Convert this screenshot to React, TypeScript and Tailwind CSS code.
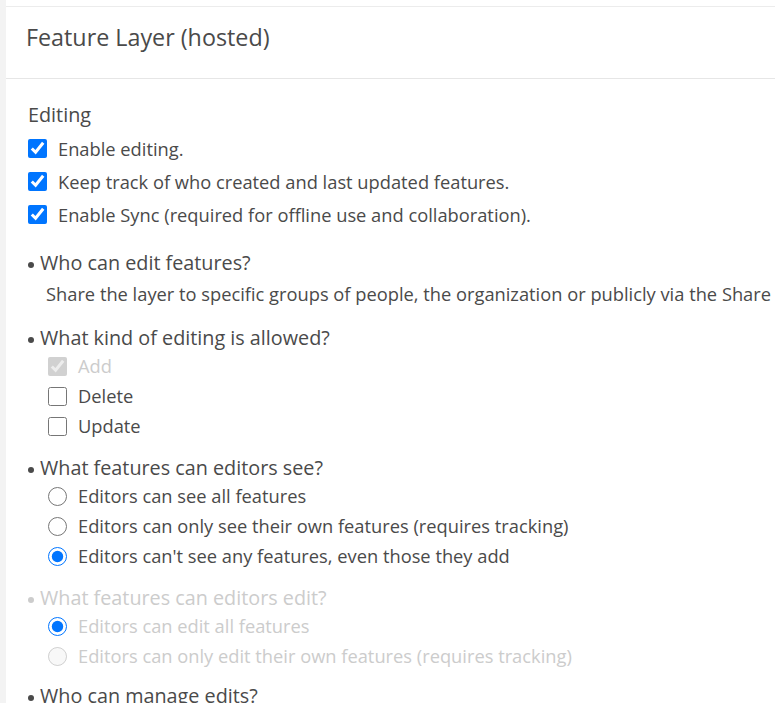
import React from 'react';

const font = { fontFamily: '"Open Sans", "Noto Sans", sans-serif' };

const Bullet: React.FC<{ text: string; disabled?: boolean }> = ({ text, disabled }) => (
    <div className={`flex items-center h-[26px] text-[19.8px] whitespace-nowrap ${disabled ? 'text-[#cccccc]' : 'text-[#4a4a4a]'}`}>
        <span className={`w-[6px] h-[6px] rounded-full mr-[6px] mt-[3px] shrink-0 ${disabled ? 'bg-[#cccccc]' : 'bg-[#4a4a4a]'}`} />
        {text}
    </div>
);

interface OptionProps {
    label: string;
    type: 'checkbox' | 'radio';
    name?: string;
    checked?: boolean;
    disabled?: boolean;
    muted?: boolean;
    indent?: boolean;
    height?: string;
}

const Option: React.FC<OptionProps> = ({ label, type, name, checked, disabled, muted, indent = true, height = 'h-[30px]' }) => (
    <label className={`flex items-center ${height} ${indent ? 'pl-[20px]' : ''} whitespace-nowrap`}>
        <input
            type={type}
            name={name}
            defaultChecked={checked}
            disabled={disabled}
            className="w-[19px] h-[19px] m-0 shrink-0 accent-[#0075ff]"
        />
        <span className={`ml-[11px] text-[18.3px] ${muted || disabled ? 'text-[#cccccc]' : 'text-[#4a4a4a]'}`}>{label}</span>
    </label>
);

export default function App() {
    return (
        <div className="flex min-h-screen bg-white overflow-hidden" style={font}>
            <div className="w-[6px] shrink-0 bg-[#f3f3f3]" />
            <div className="flex-1 min-w-0 mt-[6px] border-t border-[#ececec] overflow-hidden">
                <div className="h-[72px] flex items-center pl-[20px] border-b border-[#e6e6e6]">
                    <h1 className="text-[23.3px] text-[#4a4a4a] mb-[10px]">Feature Layer (hosted)</h1>
                </div>
                <div className="pl-[22px] pt-[19px]">
                    <div className="h-[34px] flex items-center text-[19.8px] text-[#4a4a4a]">Editing</div>
                    <Option type="checkbox" label="Enable editing." checked indent={false} height="h-[33px]" />
                    <Option type="checkbox" label="Keep track of who created and last updated features." checked indent={false} height="h-[33px]" />
                    <Option type="checkbox" label="Enable Sync (required for offline use and collaboration)." checked indent={false} height="h-[33px]" />

                    <div className="mt-[19px]">
                        <Bullet text="Who can edit features?" />
                        <div className="h-[30px] mt-[3px] flex items-center pl-[18px] text-[18.3px] text-[#4a4a4a] whitespace-nowrap">
                            Share the layer to specific groups of people, the organization or publicly via the Share dialog.
                        </div>
                    </div>

                    <div className="mt-[16px]">
                        <Bullet text="What kind of editing is allowed?" />
                        <Option type="checkbox" label="Add" checked disabled />
                        <Option type="checkbox" label="Delete" />
                        <Option type="checkbox" label="Update" />
                    </div>

                    <div className="mt-[14px]">
                        <Bullet text="What features can editors see?" />
                        <Option type="radio" name="see" label="Editors can see all features" />
                        <Option type="radio" name="see" label="Editors can only see their own features (requires tracking)" />
                        <Option type="radio" name="see" label="Editors can't see any features, even those they add" checked />
                    </div>

                    <div className="mt-[14px]">
                        <Bullet text="What features can editors edit?" disabled />
                        <Option type="radio" name="edit" label="Editors can edit all features" checked muted />
                        <Option type="radio" name="edit" label="Editors can only edit their own features (requires tracking)" disabled />
                    </div>

                    <div className="mt-[12px]">
                        <Bullet text="Who can manage edits?" />
                    </div>
                </div>
            </div>
        </div>
    );
}
